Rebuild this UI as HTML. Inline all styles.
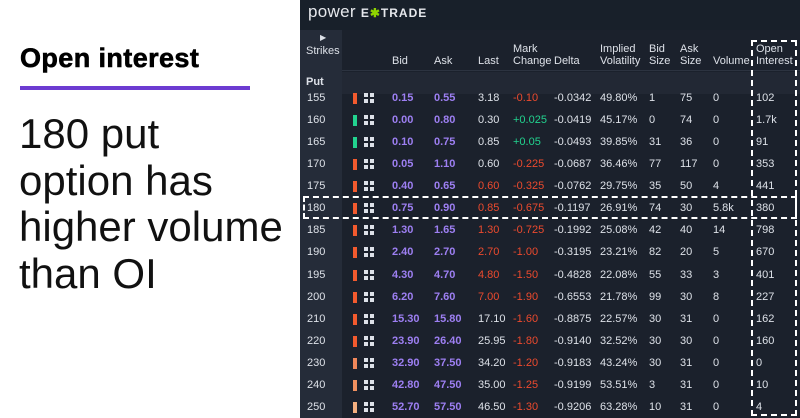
<!DOCTYPE html>
<html><head><meta charset="utf-8"><style>
*{margin:0;padding:0;box-sizing:border-box}
body{width:800px;height:418px;overflow:hidden;background:#fff;font-family:"Liberation Sans",sans-serif;position:relative}
.h1{position:absolute;left:20px;top:43px;font-size:27px;font-weight:bold;color:#000;letter-spacing:0.4px;-webkit-text-stroke:0.6px #000}
.line{position:absolute;left:20px;top:86px;width:230px;height:4px;background:#6c3bd1}
.big{position:absolute;left:19px;top:111px;font-size:42px;line-height:46.5px;color:#111;font-weight:300;letter-spacing:0}
.panel{position:absolute;left:300px;top:0;width:500px;height:418px;background:#1b212c;color:#dde1e8;font-size:11px}
.top{position:absolute;left:0;top:0;width:500px;height:30px;background:#18202a}
.logo{position:absolute;left:8px;top:2px;font-size:17px;color:#e6e8ec;letter-spacing:0.3px}
.logo b{font-size:12px;letter-spacing:1px;font-weight:bold}
.strk{position:absolute;left:0;top:30px;width:42px;height:388px;background:#252c39}
.hdr{position:absolute;top:30px;left:42px;width:458px;height:41px;background:#1b212c;border-bottom:1px solid #2c3340}
.putband{position:absolute;top:72px;left:42px;width:458px;height:22px;background:#222834}
.t{position:absolute;white-space:nowrap}
.p{color:#9d7ff2;font-weight:bold}
.r{color:#ec4a2e}
.g{color:#22d38f}
.bar{position:absolute;width:4px;height:11px}
.grid{position:absolute;width:10px;height:10px;background:
linear-gradient(#dde1e8,#dde1e8) 0 0/4px 4px no-repeat,
linear-gradient(#dde1e8,#dde1e8) 6px 0/4px 4px no-repeat,
linear-gradient(#dde1e8,#dde1e8) 0 6px/4px 4px no-repeat,
linear-gradient(#dde1e8,#dde1e8) 6px 6px/4px 4px no-repeat}
.dash{position:absolute;border:2.5px dashed #fff}
</style></head><body>
<div class="h1">Open interest</div>
<div class="line"></div>
<div class="big">180 put<br>option has<br>higher volume<br>than OI</div>
<div class="panel">
<div class="top"><div class="logo">power <b>E<span style="color:#8fd400">✱</span>TRADE</b></div></div>
<div class="strk"></div>
<div class="hdr"></div>
<div class="putband"></div>
<div class="t" style="left:20px;top:33px;font-size:8px">▶</div>
<div class="t" style="left:6px;top:45px">Strikes</div>
<div class="t" style="left:92px;top:55px">Bid</div>
<div class="t" style="left:134px;top:55px">Ask</div>
<div class="t" style="left:178px;top:55px">Last</div>
<div class="t" style="left:213px;top:43px;line-height:12px">Mark<br>Change</div>
<div class="t" style="left:254px;top:55px">Delta</div>
<div class="t" style="left:300px;top:43px;line-height:12px">Implied<br>Volatility</div>
<div class="t" style="left:349px;top:43px;line-height:12px">Bid<br>Size</div>
<div class="t" style="left:380px;top:43px;line-height:12px">Ask<br>Size</div>
<div class="t" style="left:413px;top:55px">Volume</div>
<div class="t" style="left:456px;top:43px;line-height:12px;background:#1b212c;width:40px">Open<br>Interest</div>
<div class="t" style="left:6px;top:76px;font-weight:bold">Put</div>
<div id="rows"></div>
<div class="dash" style="left:451px;top:40px;width:46px;height:376px"></div>
<div class="dash" style="left:3px;top:196px;width:494px;height:23px"></div>
</div>
<script>
var d=[
["155","#f25a2e","0.15","0.55","3.18","","-0.10","r","-0.0342","49.80%","1","75","0","102"],
["160","#22d38f","0.00","0.80","0.30","","+0.025","g","-0.0419","45.17%","0","74","0","1.7k"],
["165","#22d38f","0.10","0.75","0.85","","+0.05","g","-0.0493","39.85%","31","36","0","91"],
["170","#f25a2e","0.05","1.10","0.60","","-0.225","r","-0.0687","36.46%","77","117","0","353"],
["175","#f25a2e","0.40","0.65","0.60","r","-0.325","r","-0.0762","29.75%","35","50","4","441"],
["180","#f25a2e","0.75","0.90","0.85","r","-0.675","r","-0.1197","26.91%","74","30","5.8k","380"],
["185","#f25a2e","1.30","1.65","1.30","r","-0.725","r","-0.1992","25.08%","42","40","14","798"],
["190","#f25a2e","2.40","2.70","2.70","r","-1.00","r","-0.3195","23.21%","82","20","5","670"],
["195","#f25a2e","4.30","4.70","4.80","r","-1.50","r","-0.4828","22.08%","55","33","3","401"],
["200","#f25a2e","6.20","7.60","7.00","r","-1.90","r","-0.6553","21.78%","99","30","8","227"],
["210","#f25a2e","15.30","15.80","17.10","","-1.60","r","-0.8875","22.57%","30","31","0","162"],
["220","#f25a2e","23.90","26.40","25.95","","-1.80","r","-0.9140","32.52%","30","30","0","160"],
["230","#f0875a","32.90","37.50","34.20","","-1.20","r","-0.9183","43.24%","30","31","0","0"],
["240","#f0905f","42.80","47.50","35.00","","-1.25","r","-0.9199","53.51%","3","31","0","10"],
["250","#f4b080","52.70","57.50","46.50","","-1.30","r","-0.9206","63.28%","10","31","0","4"]];
var h="";
d.forEach(function(r,i){var y=92+i*22.07;
function s(x,t,c){h+='<div class="t '+(c||'')+'" style="left:'+x+'px;top:'+y+'px">'+t+'</div>'}
s(7,r[0]);
h+='<div class="bar" style="left:53px;top:'+(y+1)+'px;background:'+r[1]+'"></div>';
h+='<div class="grid" style="left:64px;top:'+(y+1)+'px"></div>';
s(92,r[2],'p');s(134,r[3],'p');s(178,r[4],r[5]);s(213,r[6],r[7]);s(254,r[8]);s(300,r[9]);s(349,r[10]);s(380,r[11]);s(413,r[12]);s(456,r[13]);
});
document.getElementById('rows').innerHTML=h;
</script>
</body></html>
